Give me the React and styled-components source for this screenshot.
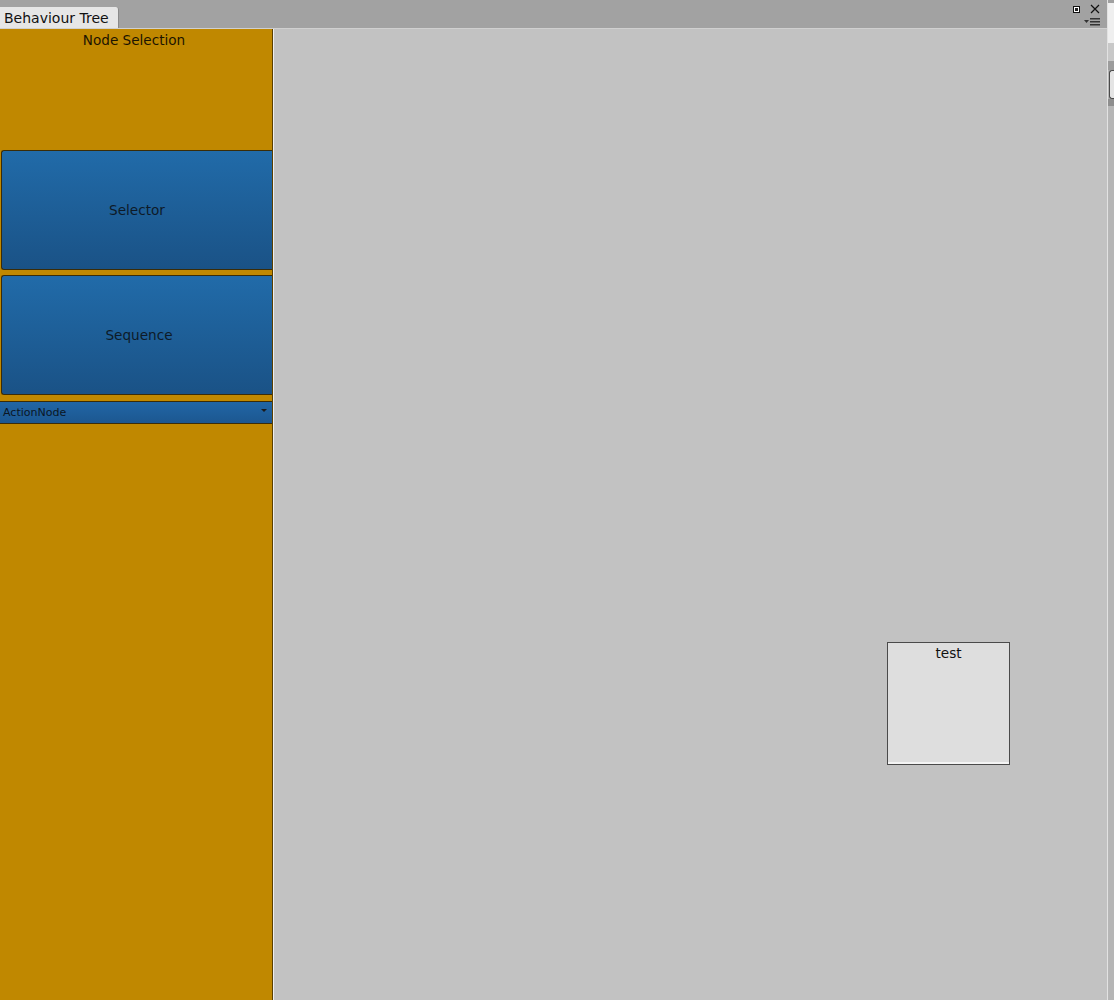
import React from "react";
import styled, { createGlobalStyle } from "styled-components";

const Global = createGlobalStyle`
  html, body { margin: 0; padding: 0; height: 100%; overflow: hidden; }
  body { font-family: "DejaVu Sans", Verdana, sans-serif; background: #a3a3a3; }
  #root { height: 100%; }
`;

const Window = styled.div`
  width: 1114px;
  height: 1000px;
  display: flex;
  background: #a3a3a3;
`;

const Main = styled.div`
  flex: 1;
  display: flex;
  flex-direction: column;
  min-width: 0;
`;

const TitleBar = styled.div`
  height: 29px;
  flex: 0 0 29px;
  display: flex;
  align-items: flex-end;
  justify-content: space-between;
  background: #a2a2a2;
  border-bottom: 1px solid #d0d0d0;
  box-sizing: border-box;
`;

const Tab = styled.div`
  height: 21px;
  padding: 0 9px 0 4px;
  display: flex;
  align-items: center;
  background: #e6e6e6;
  border-top-right-radius: 3px;
  border-right: 1px solid #8a8a8a;
  font-size: 14px;
  color: #111;
  box-sizing: border-box;
`;

const WinControls = styled.div`
  display: flex;
  flex-direction: column;
  align-items: flex-end;
  padding: 4px 7px 0 0;
  gap: 4px;
  align-self: stretch;
`;

const ControlRow = styled.div`
  display: flex;
  align-items: center;
  gap: ${(p) => p.$gap}px;
`;

const Body = styled.div`
  flex: 1;
  display: flex;
  min-height: 0;
`;

const Panel = styled.div`
  width: 272px;
  flex: 0 0 272px;
  background: #c08800;
  border-right: 1px solid #5a3f00;
  box-shadow: 1px 0 0 #eeeeee;
  display: flex;
  flex-direction: column;
  align-items: stretch;
  margin-right: 1px;
`;

const PanelTitle = styled.div`
  text-align: center;
  font-size: 13.6px;
  color: #1c1400;
  padding: 3px 4px 0 0;
  height: 118px;
  box-sizing: border-box;
  margin-bottom: 3px;
`;

const NodeButton = styled.div`
  height: 120px;
  margin: 0 0 5px 1px;
  box-sizing: border-box;
  border: 1px solid #3a2c08;
  border-right: none;
  border-radius: 3px 0 0 3px;
  background: linear-gradient(#216ba9, #1a5286);
  display: flex;
  align-items: center;
  justify-content: center;
  padding-left: ${(p) => p.$shift || 0}px;
  font-size: 13.6px;
  color: #0d1a28;
`;

const Dropdown = styled.div`
  height: 23px;
  margin-top: 1px;
  box-sizing: border-box;
  border-top: 1px solid #3a2c08;
  border-bottom: 1px solid #3a2c08;
  background: linear-gradient(#2166a6, #1c5790);
  display: flex;
  align-items: center;
  justify-content: space-between;
  padding: 0 5px 0 3px;
  font-size: 11px;
  color: #0b1624;
`;

const Arrow = styled.span`
  width: 0;
  height: 0;
  border-left: 3px solid transparent;
  border-right: 3px solid transparent;
  border-top: 3px solid #1a1a1a;
  margin-top: -4px;
`;

const Canvas = styled.div`
  flex: 1;
  background: #c2c2c2;
  position: relative;
`;

const GraphNode = styled.div`
  position: absolute;
  left: ${(p) => p.$x}px;
  top: ${(p) => p.$y}px;
  width: 123px;
  height: 123px;
  box-sizing: border-box;
  background: #dedede;
  border: 1px solid #4a4a4a;
  box-shadow: inset 0 -2px 0 #f4f4f4;
  text-align: center;
  font-size: 13.6px;
  color: #111;
  padding-top: 2px;
`;

const SideStrip = styled.div`
  width: 7px;
  flex: 0 0 7px;
  background: #b4b4b4;
  border-left: 1px solid #e2e2e2;
  box-sizing: border-box;
  display: flex;
  flex-direction: column;
`;

const StripBlock = styled.div`
  height: ${(p) => p.$h}px;
  flex: 0 0 ${(p) => p.$h}px;
  background: ${(p) => p.$c};
  border-left: ${(p) => (p.$edge ? "1px solid #4a4a4a" : "none")};
  border-top: ${(p) => (p.$edge ? "1px solid #4a4a4a" : "none")};
  border-bottom: ${(p) => (p.$edge ? "1px solid #4a4a4a" : "none")};
  border-radius: ${(p) => (p.$edge ? "3px 0 0 3px" : "0")};
  margin-left: ${(p) => (p.$edge ? 1 : 0)}px;
  box-sizing: border-box;
`;

export default function App() {
  return (
    <>
      <Global />
      <Window>
        <Main>
          <TitleBar>
            <Tab>Behaviour Tree</Tab>
            <WinControls>
              <ControlRow $gap={10}>
                <svg width="7" height="7" viewBox="0 0 7 7">
                  <rect x="0.5" y="0.5" width="6" height="6" fill="#fff" stroke="#111" />
                  <rect x="2" y="2" width="3" height="3" fill="#222" />
                </svg>
                <svg width="10" height="10" viewBox="0 0 10 10">
                  <path d="M1 1 L9 9 M9 1 L1 9" stroke="#111" strokeWidth="1.2" />
                </svg>
              </ControlRow>
              <ControlRow $gap={1}>
                <svg width="5" height="4" viewBox="0 0 5 4">
                  <path d="M0 0 L5 0 L2.5 3 Z" fill="#333" />
                </svg>
                <svg width="10" height="8" viewBox="0 0 10 8">
                  <rect x="0" y="0" width="10" height="1.5" fill="#333" />
                  <rect x="0" y="3" width="10" height="1.5" fill="#333" />
                  <rect x="0" y="6" width="10" height="1.5" fill="#333" />
                </svg>
              </ControlRow>
            </WinControls>
          </TitleBar>
          <Body>
            <Panel>
              <PanelTitle>Node Selection</PanelTitle>
              <NodeButton>Selector</NodeButton>
              <NodeButton $shift={4}>Sequence</NodeButton>
              <Dropdown>
                <span>ActionNode</span>
                <Arrow />
              </Dropdown>
            </Panel>
            <Canvas>
              <GraphNode $x={613} $y={613}>test</GraphNode>
            </Canvas>
          </Body>
        </Main>
        <SideStrip>
          <StripBlock $h={3} $c="#a0a0a0" />
          <StripBlock $h={40} $c="#efefef" />
          <StripBlock $h={18} $c="#c8c8c8" />
          <StripBlock $h={9} $c="#9c9c9c" />
          <StripBlock $h={29} $c="#e4e4e4" $edge />
          <StripBlock $h={7} $c="#8e8e8e" />
          <StripBlock $h={900} $c="#b6b6b6" />
        </SideStrip>
      </Window>
    </>
  );
}
